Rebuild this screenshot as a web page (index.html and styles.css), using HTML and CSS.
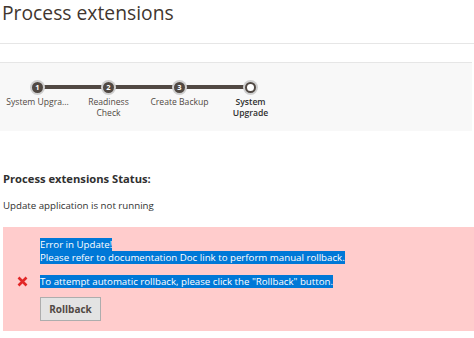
FILE: index.html
```html
<!DOCTYPE html>
<html>
<head>
<meta charset="utf-8">
<link rel="stylesheet" href="styles.css">
</head>
<body>
<h1 class="title">Process extensions</h1>
<div class="divider"></div>
<div class="progress">
  <div class="step">
    <div class="track"><span class="seg hidden"></span><span class="dot">1</span><span class="seg"></span></div>
    <div class="label">System Upgra...</div>
  </div>
  <div class="step">
    <div class="track"><span class="seg"></span><span class="dot">2</span><span class="seg"></span></div>
    <div class="label">Readiness<br>Check</div>
  </div>
  <div class="step">
    <div class="track"><span class="seg"></span><span class="dot">3</span><span class="seg"></span></div>
    <div class="label">Create Backup</div>
  </div>
  <div class="step current">
    <div class="track"><span class="seg"></span><span class="dot open"></span><span class="seg hidden"></span></div>
    <div class="label">System<br>Upgrade</div>
  </div>
</div>
<h2 class="status-title">Process extensions Status:</h2>
<p class="status-text">Update application is not running</p>
<div class="error-box">
  <div class="icon-col">
    <svg class="x-icon" width="11" height="11" viewBox="0 0 11 11"><path d="M1.5 1.5 L9.5 9.5 M9.5 1.5 L1.5 9.5" stroke="#e22626" stroke-width="2.6" stroke-linecap="butt"/></svg>
  </div>
  <div class="msg">
    <p class="para"><span class="sel">Error in Update!<br>Please refer to documentation Doc link to perform manual rollback.</span></p>
    <p class="para last"><span class="sel">To attempt automatic rollback, please click the "Rollback" button.</span></p>
    <button class="btn">Rollback</button>
  </div>
</div>
</body>
</html>
```
FILE: styles.css
```css
* { box-sizing: border-box; }
html, body { margin: 0; padding: 0; background: #fff; }
body { font-family: "Open Sans", "DejaVu Sans", sans-serif; color: #303030; width: 474px; }
.title {
  margin: 0;
  padding: 0 0 0 2px;
  font-size: 19.3px;
  font-weight: 400;
  color: #41362f;
  line-height: 26px;
  height: 43px;
}
.divider { height: 1px; background: #e6e6e6; }
.progress {
  margin-top: 18px;
  width: 472px;
  height: 69px;
  background: #f8f8f8;
  border-top: 1px solid #e6e6e6;
  display: flex;
  padding: 17px 0 0 2px;
}
.step { width: 71px; display: flex; flex-direction: column; align-items: center; }
.track { width: 100%; height: 14px; display: flex; align-items: center; }
.seg { flex: 1; height: 4px; background: #514943; }
.seg.hidden { background: transparent; }
.dot {
  width: 11px; height: 11px; border-radius: 50%;
  background: #514943; color: #fff;
  font-size: 7.5px; font-weight: 700; line-height: 11px; text-align: center;
  box-shadow: 0 0 0 2px #cfcfcf;
  margin: 0 -1px;
  position: relative;
}
.dot.open { background: #fff; border: 2.5px solid #514943; }
.label {
  margin-top: 3px;
  font-size: 8.6px;
  line-height: 11px;
  text-align: center;
  color: #514943;
  white-space: nowrap;
}
.current .label { color: #303030; font-weight: 600; }
.status-title {
  margin: 40px 0 0 0;
  padding-left: 3px;
  font-size: 11.2px;
  font-weight: 700;
  color: #303030;
  line-height: 15px;
}
.status-text {
  margin: 14px 0 0 0;
  padding-left: 3px;
  font-size: 9.7px;
  line-height: 12px;
  color: #303030;
}
.error-box {
  margin: 15px 0 0 3px;
  background: #ffcccc;
  height: 104px;
  display: flex;
  padding-top: 11px;
}
.icon-col { width: 37px; display: flex; justify-content: center; padding-top: 38px; padding-left: 2px; }
.msg { display: flex; flex-direction: column; align-items: flex-start; }
.para { margin: 0 0 11px 0; font-size: 9.7px; line-height: 13px; color: #303030; }
.para.last { margin-bottom: 9px; }
.sel { background: #0078d7; color: #fff; }
.btn {
  width: 61px; height: 24px;
  background: #e3e3e3;
  border: 1px solid #adadad;
  font-family: "Open Sans", sans-serif;
  font-size: 10px; font-weight: 700; color: #514943;
  padding: 0;
}
```
